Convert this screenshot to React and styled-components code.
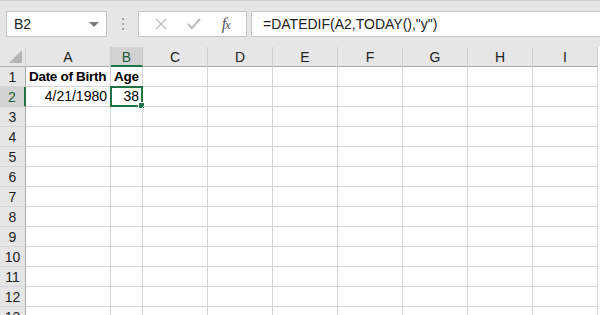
import React from 'react';
import styled, { createGlobalStyle } from 'styled-components';

const GlobalStyle = createGlobalStyle`
  html, body {
    margin: 0;
    padding: 0;
    background: #fff;
    overflow: hidden;
  }
  body {
    font-family: 'Liberation Sans', Arial, sans-serif;
  }
`;

const GREEN = '#217346';
const GRID = '#d4d4d4';
const HEAD_LINE = '#ababab';

const Window = styled.div`
  width: 600px;
  height: 315px;
  overflow: hidden;
  background: #fff;
`;

const Toolbar = styled.div`
  height: 47px;
  box-sizing: border-box;
  background: #e6e6e6;
  border-top: 1px solid #d0d0d0;
  display: flex;
  align-items: flex-start;
  padding: 10px 0 0 6px;
`;

const NameBox = styled.div`
  width: 101px;
  height: 26px;
  box-sizing: border-box;
  background: #fff;
  border: 1px solid #c6c6c6;
  display: flex;
  align-items: center;
  justify-content: space-between;
  padding: 0 7px 0 7px;
  font-size: 14px;
  color: #222;
`;

const Caret = styled.span`
  width: 0;
  height: 0;
  border-left: 5px solid transparent;
  border-right: 5px solid transparent;
  border-top: 5px solid #7a7a7a;
`;

const Grip = styled.div`
  width: 31px;
  height: 26px;
  display: flex;
  flex-direction: column;
  align-items: center;
  justify-content: center;
  gap: 3px;
  span {
    width: 2px;
    height: 2px;
    background: #a8a8a8;
  }
`;

const ButtonBox = styled.div`
  width: 109px;
  height: 26px;
  box-sizing: border-box;
  background: #fff;
  border: 1px solid #c6c6c6;
  display: flex;
  align-items: center;
  justify-content: space-around;
  padding: 0 6px;
`;

const Fx = styled.span`
  font-family: 'Liberation Serif', 'Times New Roman', serif;
  font-style: italic;
  font-size: 16px;
  color: #555;
  letter-spacing: -1px;
  b {
    font-weight: normal;
    font-size: 13px;
  }
`;

const FormulaBar = styled.div`
  flex: 1;
  margin-left: 4px;
  height: 26px;
  box-sizing: border-box;
  background: #fff;
  border: 1px solid #c6c6c6;
  border-right: none;
  display: flex;
  align-items: center;
  padding-left: 11px;
  font-size: 14px;
  color: #222;
  white-space: nowrap;
`;

const Sheet = styled.div`
  display: grid;
  grid-template-columns: 26px 85px 32px repeat(7, 65px);
  grid-auto-rows: 20px;
  grid-template-rows: 20px;
`;

const Corner = styled.div`
  background: #e6e6e6;
  border-right: 1px solid ${GRID};
  border-bottom: 1px solid ${HEAD_LINE};
  position: relative;
  &::after {
    content: '';
    position: absolute;
    right: 3px;
    bottom: 3px;
    width: 0;
    height: 0;
    border-left: 13px solid transparent;
    border-bottom: 13px solid #b4b4b4;
  }
`;

const ColHead = styled.div`
  background: ${p => (p.$active ? '#d2d2d2' : '#e6e6e6')};
  border-right: 1px solid ${p => (p.$active ? '#c6c6c6' : '#d0d0d0')};
  border-bottom: ${p => (p.$active ? `2px solid ${GREEN}` : `1px solid ${HEAD_LINE}`)};
  display: flex;
  align-items: center;
  justify-content: center;
  font-size: 14px;
  color: ${p => (p.$active ? '#1e5c3a' : '#222')};
  padding-top: 1px;
`;

const RowHead = styled.div`
  background: ${p => (p.$active ? '#d2d2d2' : '#e6e6e6')};
  border-right: ${p => (p.$active ? `2px solid ${GREEN}` : `1px solid ${HEAD_LINE}`)};
  border-bottom: 1px solid ${GRID};
  display: flex;
  align-items: center;
  justify-content: center;
  font-size: 14px;
  color: ${p => (p.$active ? '#1e5c3a' : '#222')};
`;

const Cell = styled.div`
  position: relative;
  border-right: 1px solid ${GRID};
  border-bottom: 1px solid ${GRID};
  display: flex;
  align-items: flex-end;
  justify-content: ${p => (p.$right ? 'flex-end' : 'flex-start')};
  padding: 0 3px 2px 3px;
  font-size: ${p => (p.$bold ? '13.5px' : '14px')};
  letter-spacing: ${p => (p.$bold ? '-0.3px' : '0')};
  font-weight: ${p => (p.$bold ? 700 : 400)};
  color: #000;
  white-space: nowrap;
  overflow: visible;
`;

const Selection = styled.div`
  position: absolute;
  left: -1px;
  top: -1px;
  right: -1px;
  bottom: -1px;
  border: 2px solid ${GREEN};
  pointer-events: none;
  &::after {
    content: '';
    position: absolute;
    right: -4px;
    bottom: -4px;
    width: 5px;
    height: 5px;
    background: ${GREEN};
    border: 1px solid #fff;
  }
`;

const columns = ['A', 'B', 'C', 'D', 'E', 'F', 'G', 'H', 'I'];
const rows = Array.from({ length: 13 }, (_, i) => i + 1);

const data = {
  A1: { text: 'Date of Birth', bold: true },
  B1: { text: 'Age', bold: true },
  A2: { text: '4/21/1980', right: true },
  B2: { text: '38', right: true },
};

const CancelIcon = () => (
  <svg width="12" height="12" viewBox="0 0 12 12">
    <path d="M1 1 L11 11 M11 1 L1 11" stroke="#bdbdbd" strokeWidth="1.4" fill="none" />
  </svg>
);

const CheckIcon = () => (
  <svg width="14" height="12" viewBox="0 0 14 12">
    <path d="M1 6 L5 10 L13 1" stroke="#bdbdbd" strokeWidth="2" fill="none" />
  </svg>
);

const App = () => (
  <Window>
    <GlobalStyle />
    <Toolbar>
      <NameBox>
        B2
        <Caret />
      </NameBox>
      <Grip>
        <span />
        <span />
        <span />
      </Grip>
      <ButtonBox>
        <CancelIcon />
        <CheckIcon />
        <Fx>
          f<b>x</b>
        </Fx>
      </ButtonBox>
      <FormulaBar>=DATEDIF(A2,TODAY(),"y")</FormulaBar>
    </Toolbar>
    <Sheet>
      <Corner />
      {columns.map(c => (
        <ColHead key={c} $active={c === 'B'}>
          {c}
        </ColHead>
      ))}
      {rows.map(r => (
        <React.Fragment key={r}>
          <RowHead $active={r === 2}>{r}</RowHead>
          {columns.map(c => {
            const ref = `${c}${r}`;
            const d = data[ref];
            return (
              <Cell key={ref} $bold={d && d.bold} $right={d && d.right}>
                {d && d.text}
                {ref === 'B2' && <Selection />}
              </Cell>
            );
          })}
        </React.Fragment>
      ))}
    </Sheet>
  </Window>
);

export default App;
